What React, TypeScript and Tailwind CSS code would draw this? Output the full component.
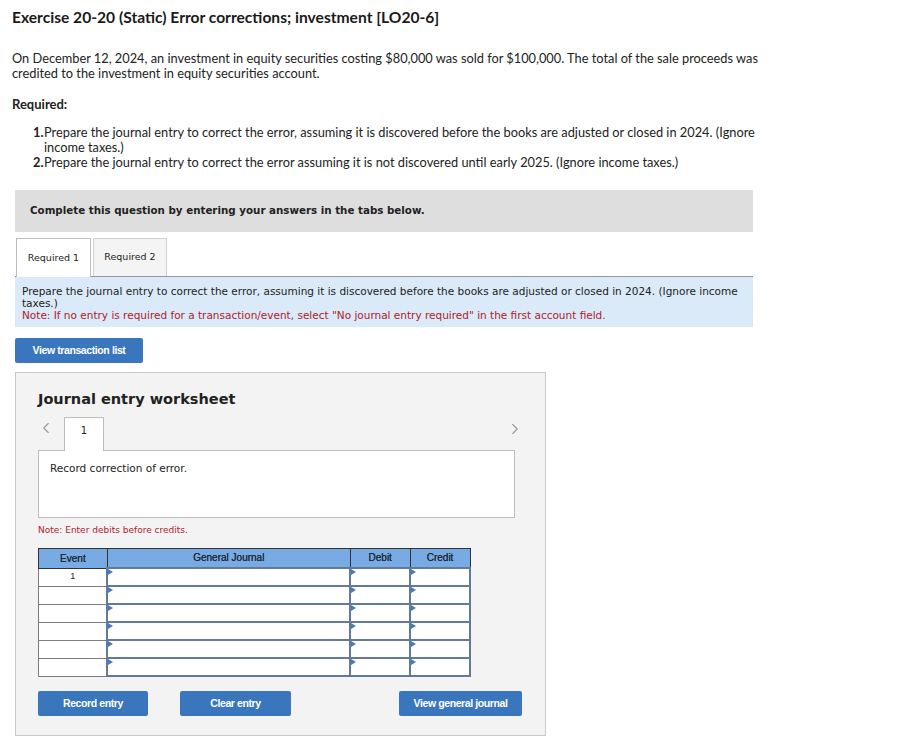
import { ChevronLeft, ChevronRight } from 'lucide-react'

const sans = { fontFamily: 'Lato, "Liberation Sans", sans-serif' }

function Triangle() {
  return (
    <span className="absolute left-0 top-0 h-0 w-0 border-y-[3px] border-l-[5px] border-y-transparent border-l-[#4a7bb8]" />
  )
}

function BlueButton({ label, width }: { label: string; width: string }) {
  return (
    <button
      className={`${width} block h-[25px] rounded-[2px] bg-[#3a76bd] text-[10.5px] font-bold tracking-[-0.4px] text-white`}
      style={{ fontFamily: '"Liberation Sans", Arial, sans-serif' }}
    >
      {label}
    </button>
  )
}

export default function App() {
  const rows = [1, 2, 3, 4, 5, 6]

  return (
    <div className="min-h-[754px] w-[914px] bg-white pb-4 text-[#222]">
      {/* Question text */}
      <div className="px-[12px] pt-[8px]" style={sans}>
        <h1 className="text-[15.6px] font-bold leading-[18px] text-[#1a1a1a]">
          Exercise 20-20 (Static) Error corrections; investment [LO20-6]
        </h1>
        <p className="mt-[25px] w-[760px] text-[12.8px] leading-[15px]">
          On December 12, 2024, an investment in equity securities costing $80,000 was sold for $100,000. The total of the sale proceeds was credited to the investment in equity securities account.
        </p>
        <p className="mt-[16px] text-[13px] font-bold leading-[15px]">Required:</p>
        <ol className="mt-[13px] w-[760px] pl-[21px] text-[12.8px] leading-[15px]">
          <li className="flex">
            <span className="w-[11px] shrink-0 font-bold">1.</span>
            <span>
              Prepare the journal entry to correct the error, assuming it is discovered before the books are adjusted or closed in 2024. (Ignore income taxes.)
            </span>
          </li>
          <li className="flex">
            <span className="w-[11px] shrink-0 font-bold">2.</span>
            <span>Prepare the journal entry to correct the error assuming it is not discovered until early 2025. (Ignore income taxes.)</span>
          </li>
        </ol>
      </div>

      <div className="ml-[15px] w-[738px]" style={{ fontFamily: '"DejaVu Sans", Verdana, sans-serif' }}>
        {/* Instruction bar */}
        <div className="mt-[20px] flex h-[42px] items-center bg-[#dedede] pl-[15px] text-[10.3px] font-bold text-[#222]">
          Complete this question by entering your answers in the tabs below.
        </div>

        {/* Tabs */}
        <div className="mt-[6px] flex gap-[2px] pl-[1px]">
          <div className="relative z-10 -mb-px flex h-[39px] w-[75px] items-center justify-center border border-b-0 border-[#bdbdbd] bg-white text-[9.5px]">
            Required 1
          </div>
          <div className="flex h-[38px] w-[74px] items-center justify-center border border-b-0 border-[#cfcfcf] bg-[#f4f4f4] text-[9.5px]">
            Required 2
          </div>
        </div>

        {/* Tab content */}
        <div className="border-t border-[#8f98a3] bg-[#dbeaf8] px-[7px] pb-[6px] pt-[8px] text-[10.5px] leading-[12px]">
          <p>
            Prepare the journal entry to correct the error, assuming it is discovered before the books are adjusted or closed in 2024. (Ignore income taxes.)
          </p>
          <p className="text-[#b0202c]">
            Note: If no entry is required for a transaction/event, select "No journal entry required" in the first account field.
          </p>
        </div>

        <div className="mt-[11px] flex">
          <BlueButton label="View transaction list" width="w-[128px]" />
        </div>

        {/* Worksheet */}
        <div className="mt-[9px] w-[531px] border border-[#c8c8c8] bg-[#f3f3f3] pb-[19px] pl-[22px] pt-[17px]">
          <h2 className="text-[14.5px] font-bold leading-[18px] text-[#222]">Journal entry worksheet</h2>

          <div className="mt-[9px] flex h-[33px] w-[477px] items-start">
            <ChevronLeft size={18} strokeWidth={1.5} className="ml-[-1px] mt-[2px] text-[#9a9a9a]" />
            <div className="relative z-10 ml-[9px] flex h-[34px] w-[40px] items-start justify-center border border-b-0 border-[#bdbdbd] bg-white pt-[5px] text-[10px]">
              1
            </div>
            <div className="flex-1" />
            <ChevronRight size={18} strokeWidth={1.5} className="mr-[-9px] mt-[3px] text-[#9a9a9a]" />
          </div>

          <div className="h-[68px] w-[477px] border border-[#bdbdbd] bg-white pl-[11px] pt-[10px] text-[10.5px]">
            Record correction of error.
          </div>

          <p className="mt-[6px] text-[9px] text-[#b0202c]">Note: Enter debits before credits.</p>

          {/* Journal table */}
          <table
            className="mt-[10px] w-[433px] border-collapse text-[10px]"
            style={{ fontFamily: '"Liberation Sans", Arial, sans-serif' }}
          >
            <thead>
              <tr className="h-[20px] bg-[#78abe3] text-[#1f2a3a]">
                <th className="w-[69px] border border-[#333] font-normal [text-shadow:0_0_0.4px_#1f2a3a]">Event</th>
                <th className="w-[244px] border border-[#333] font-normal [text-shadow:0_0_0.4px_#1f2a3a]">General Journal</th>
                <th className="w-[60px] border border-[#333] font-normal [text-shadow:0_0_0.4px_#1f2a3a]">Debit</th>
                <th className="w-[60px] border border-[#333] font-normal [text-shadow:0_0_0.4px_#1f2a3a]">Credit</th>
              </tr>
            </thead>
            <tbody>
              {rows.map((r) => (
                <tr key={r} className="h-[18px]">
                  <td className="border border-[#7d7d7d] bg-white text-center align-top text-[9px] leading-[14px]">
                    {r === 1 ? '1' : ''}
                  </td>
                  <td className="relative border-2 border-[#62799a] bg-white p-0">
                    <Triangle />
                  </td>
                  <td className="relative border-2 border-[#62799a] bg-white p-0">
                    <Triangle />
                  </td>
                  <td className="relative border-2 border-[#62799a] bg-white p-0">
                    <Triangle />
                  </td>
                </tr>
              ))}
            </tbody>
          </table>

          <div className="mt-[14px] flex w-[484px] items-center">
            <BlueButton label="Record entry" width="w-[110px]" />
            <div className="ml-[32px]">
              <BlueButton label="Clear entry" width="w-[111px]" />
            </div>
            <div className="flex-1" />
            <BlueButton label="View general journal" width="w-[123px]" />
          </div>
        </div>
      </div>
    </div>
  )
}
